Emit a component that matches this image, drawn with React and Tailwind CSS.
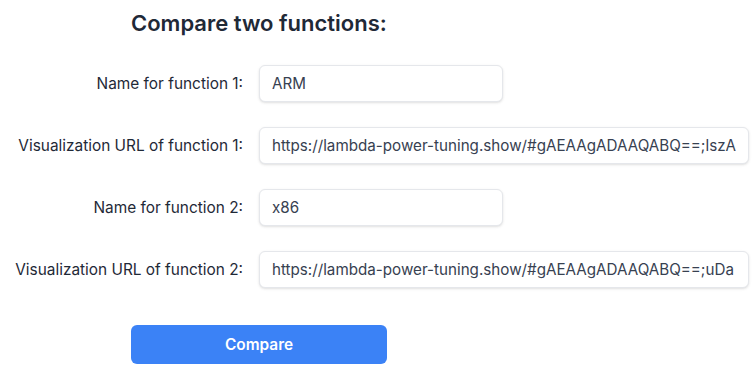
import { useState } from "react";

const fields = [
  { id: "name1", label: "Name for function 1:", value: "ARM", wide: false },
  {
    id: "url1",
    label: "Visualization URL of function 1:",
    value: "https://lambda-power-tuning.show/#gAEAAgADAAQABQ==;lszA",
    wide: true,
  },
  { id: "name2", label: "Name for function 2:", value: "x86", wide: false },
  {
    id: "url2",
    label: "Visualization URL of function 2:",
    value: "https://lambda-power-tuning.show/#gAEAAgADAAQABQ==;uDa",
    wide: true,
  },
];

export default function App() {
  const [values, setValues] = useState(
    Object.fromEntries(fields.map((f) => [f.id, f.value])),
  );

  return (
    <div className="min-h-[377px] w-[756px] bg-white font-['Inter',sans-serif] text-gray-800 antialiased">
      <h2 className="pl-[131px] pt-[8px] text-[22px] font-semibold leading-[30px] text-[#1f2937]">
        Compare two functions:
      </h2>

      <form
        className="mt-[27px] flex flex-col gap-[25px]"
        onSubmit={(e) => e.preventDefault()}
      >
        {fields.map((f) => (
          <div key={f.id} className="flex items-center">
            <label
              htmlFor={f.id}
              className="w-[259px] shrink-0 pr-4 text-right text-[15.4px] text-[#1f2937]"
            >
              {f.label}
            </label>
            <input
              id={f.id}
              type="text"
              value={values[f.id]}
              onChange={(e) => setValues({ ...values, [f.id]: e.target.value })}
              className={`h-[37px] rounded-md border border-gray-200 bg-white px-3 text-[15.2px] text-[#374151] shadow-sm outline-none ${
                f.wide ? "w-[490px]" : "w-[244px]"
              }`}
            />
          </div>
        ))}

        <div className="mt-[12px] pl-[131px]">
          <button
            type="submit"
            className="h-[39px] w-[256px] rounded-md bg-[#3b82f6] text-[15.4px] font-semibold text-white"
          >
            Compare
          </button>
        </div>
      </form>
    </div>
  );
}
